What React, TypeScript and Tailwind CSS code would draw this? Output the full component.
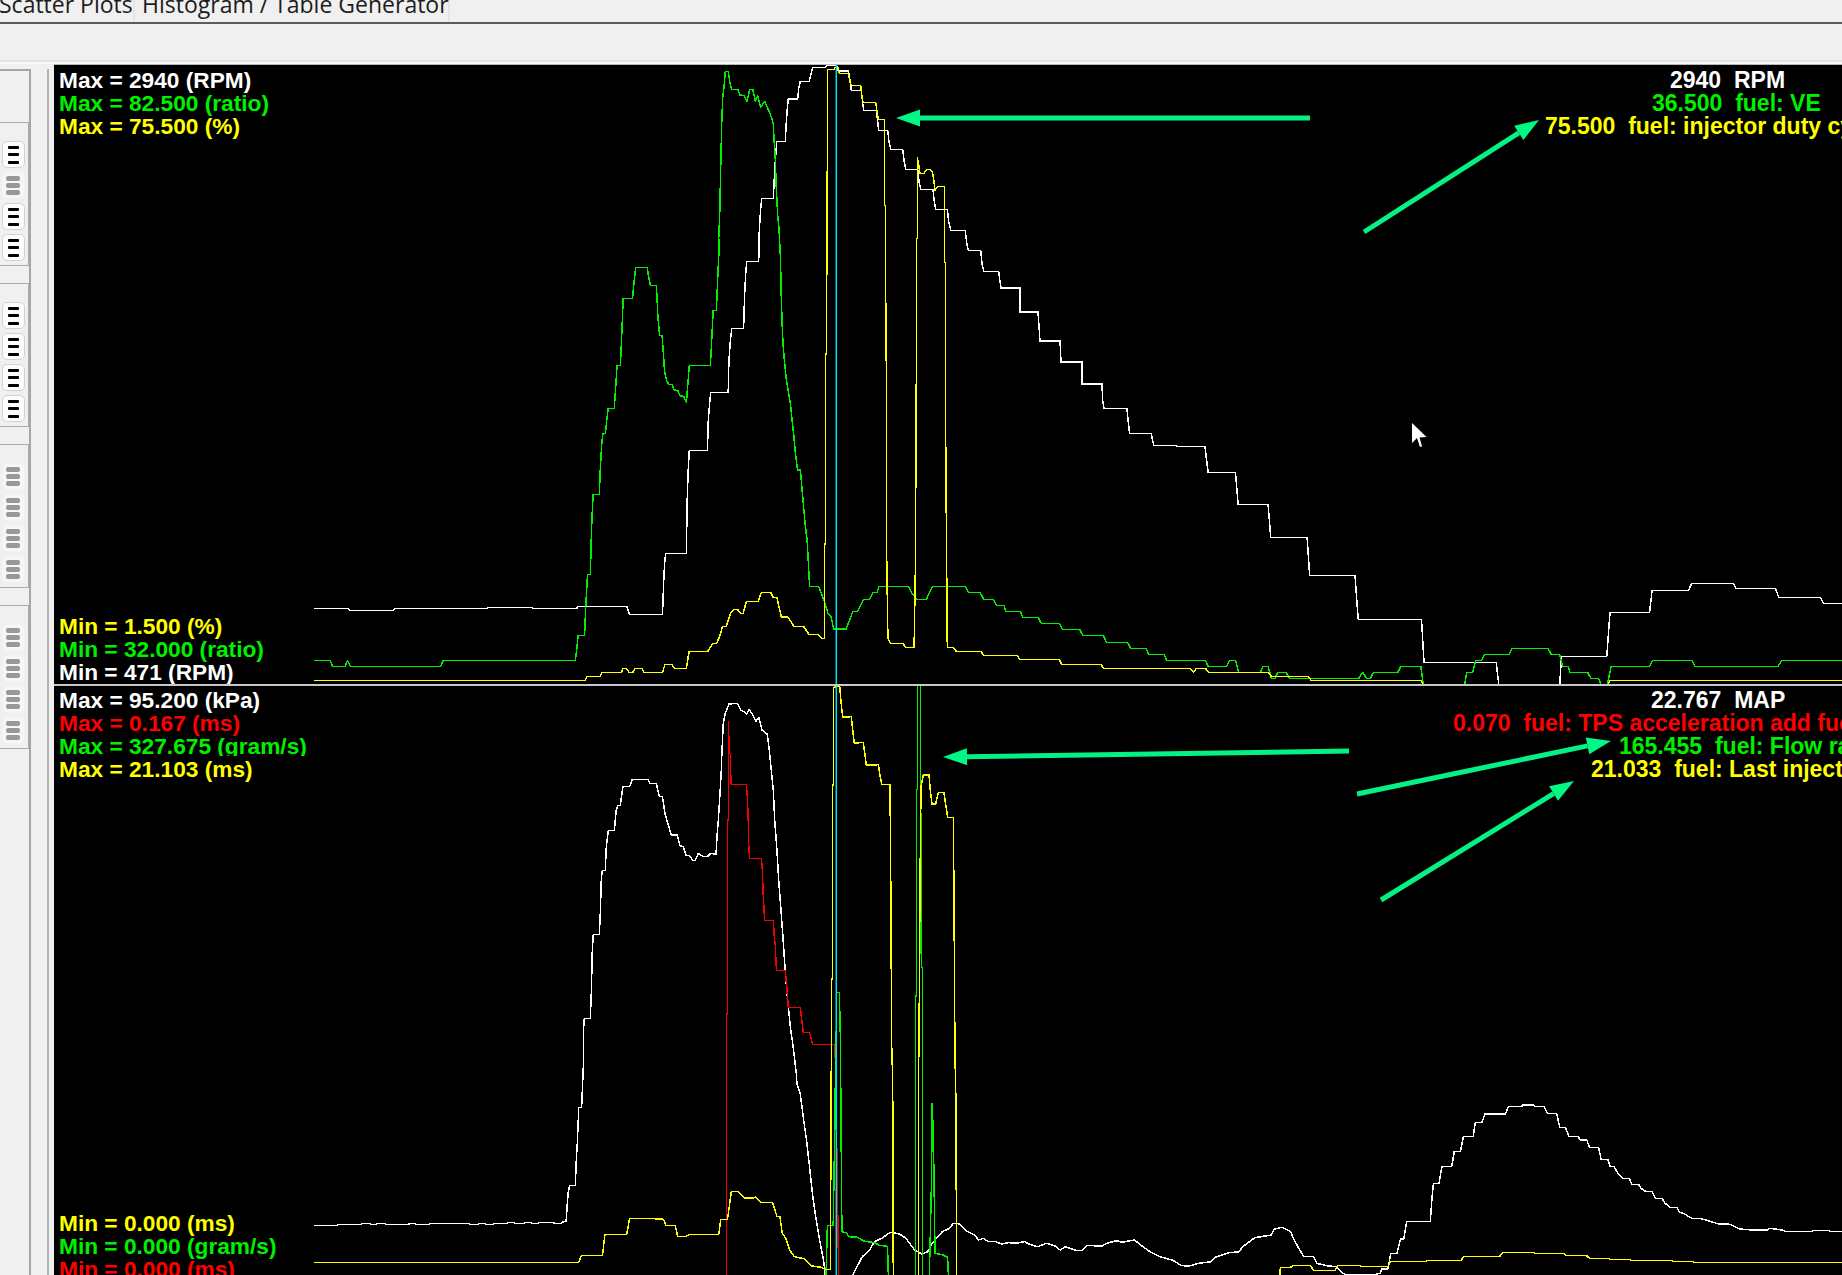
import React from 'react';

// crop-space readings of each trace -> page coords
const at =
  (ox: number, oy: number, kx: number, ky = 3) =>
  (...v: number[]) => {
    const out: string[] = [];
    for (let i = 0; i < v.length; i += 2) {
      out.push(`${(ox + v[i] / kx).toFixed(1)},${(oy + v[i + 1] / ky).toFixed(1)}`);
    }
    return out.join(' ');
  };
const page = at(0, 0, 1, 1);
const z6 = at(650, 55, 3);
const z8 = at(300, 240, 2.8);
const z9 = at(840, 400, 1.565);
const z10 = at(540, 680, 3);
const z11 = at(300, 1060, 2.063);
const z12 = at(1040, 1060, 1.955);

const WHITE = '#ffffff';
const GREEN = '#00f000';
const YELLOW = '#ffff00';
const RED = '#f00000';
const CYAN = '#00e0f0';

type Trace = { color: string; points: string };

const upperTraces: Trace[] = [
  {
    color: WHITE,
    points: [
      z8(39, 1105, 134, 1105, 140, 1111, 260, 1111, 266, 1105, 524, 1105, 526, 1102, 650, 1102, 652, 1105, 775, 1105, 779, 1099, 915, 1099, 922, 1123, 1015, 1123, 1018, 1030, 1021, 970, 1024, 940, 1082, 940, 1084, 790, 1087, 690, 1090, 631, 1141, 631, 1143, 545, 1147, 490, 1150, 457, 1199, 457, 1201, 365, 1205, 300, 1209, 265, 1242, 265, 1245, 165, 1248, 100, 1251, 64),
      z6(326, 620, 328, 525, 332, 460, 335, 430, 370, 430, 374, 345, 378, 290, 380, 259, 406, 259, 409, 200, 412, 160, 415, 132, 443, 132, 446, 100, 451, 79, 478, 79, 483, 57, 488, 37, 526, 37, 530, 32, 560, 32, 565, 48, 595, 48, 599, 70, 604, 106, 634, 106, 638, 145, 641, 166, 679, 166, 683, 200, 686, 226, 713, 226, 717, 260, 722, 283, 758, 283, 763, 320, 767, 343, 803, 343, 808, 385, 812, 403, 849, 403, 853, 440, 857, 463, 892, 463, 896, 500, 902, 526, 946, 526, 950, 565, 955, 586, 992, 586, 996, 625, 1001, 649, 1046, 649, 1050, 680),
      page(1001, 288, 1020, 288, 1020, 312, 1038, 312, 1040, 341, 1060, 341, 1061, 362, 1082, 362, 1082, 384, 1102, 384),
      z9(411, 0, 413, 25, 449, 25, 453, 100, 487, 100, 491, 136, 526, 136, 527, 139, 571, 139, 576, 217, 619, 217, 623, 313, 670, 313, 674, 412, 731, 412, 735, 526, 806, 526, 811, 658, 910, 658, 914, 787, 1027, 787, 1032, 870, 1126, 870, 1129, 769, 1200, 769, 1205, 637, 1267, 637, 1271, 571, 1328, 571, 1333, 550, 1398, 550, 1402, 565, 1464, 565, 1469, 592, 1534, 592, 1539, 610, 1568, 610),
    ].join(' '),
  },
  {
    color: GREEN,
    points: [
      z8(39, 1261, 84, 1261, 91, 1279, 126, 1279, 133, 1262, 141, 1279, 394, 1279, 401, 1261, 771, 1261, 775, 1225, 779, 1186, 797, 1186, 800, 1100, 803, 1040, 805, 1003, 813, 1003, 816, 880, 819, 800, 821, 763, 838, 763, 841, 680, 845, 610, 848, 580, 855, 580, 859, 540, 863, 505, 880, 505, 884, 440, 888, 376, 897, 376, 901, 280, 905, 175, 931, 175, 935, 130, 940, 82, 972, 82, 976, 110, 981, 136, 998, 136, 1002, 230, 1007, 287, 1014, 287, 1018, 350, 1021, 395, 1026, 420, 1032, 433, 1041, 433, 1048, 450, 1058, 452, 1064, 467, 1074, 469, 1082, 487, 1086, 430, 1090, 376, 1149, 376, 1153, 295, 1157, 211, 1166, 211, 1170, 100, 1175, 0),
      z6(205, 580, 209, 480, 212, 340, 215, 207, 218, 127, 222, 95, 226, 49, 235, 49, 240, 85, 245, 103, 263, 103, 270, 120, 283, 122, 291, 140, 299, 103, 308, 103, 316, 138, 323, 122, 332, 157, 344, 139, 358, 170, 365, 190, 370, 207, 372, 250, 376, 315, 379, 400, 383, 480, 387, 520, 391, 600),
      z8(1345, 40, 1347, 150, 1350, 250, 1353, 320, 1358, 380, 1362, 420, 1368, 460, 1373, 490, 1378, 540, 1383, 590, 1387, 640, 1393, 690, 1401, 690, 1405, 740, 1410, 800, 1415, 860, 1420, 900, 1423, 960, 1427, 1039, 1452, 1039, 1460, 1060, 1470, 1090, 1478, 1120, 1487, 1130, 1494, 1167, 1529, 1167),
      z9(20, 635, 27, 635, 37, 598, 46, 598, 52, 577, 58, 577, 61, 559, 107, 559, 112, 578, 120, 598, 135, 598, 145, 559, 196, 559, 201, 577, 219, 577, 225, 598, 240, 598, 245, 616, 257, 616, 259, 634, 282, 634, 286, 652, 310, 652, 315, 670, 343, 670, 348, 688, 375, 688, 380, 706, 412, 706, 417, 727, 450, 727, 455, 745, 479, 745, 483, 763, 507, 763, 511, 781, 572, 781, 576, 799, 605, 799, 610, 781, 619, 781, 624, 817, 658, 817, 662, 799, 670, 799, 675, 835, 681, 835, 685, 817, 698, 817, 704, 835, 812, 835, 818, 817, 824, 835, 830, 835, 835, 817, 873, 817, 878, 799, 909, 799, 914, 870, 976, 870, 981, 817, 990, 817, 995, 781, 1004, 781, 1009, 763, 1047, 763, 1052, 745, 1108, 745, 1113, 763, 1126, 763, 1131, 799, 1140, 799, 1142, 817, 1170, 817, 1175, 835, 1187, 835, 1192, 860, 1200, 860, 1207, 799, 1267, 799, 1272, 781, 1333, 781, 1338, 799, 1468, 799, 1474, 781, 1568, 781),
    ].join(' '),
  },
  {
    color: YELLOW,
    points: [
      z8(39, 1321, 798, 1321, 804, 1309, 840, 1309, 846, 1297, 900, 1297, 905, 1285, 914, 1285, 921, 1297, 932, 1297, 938, 1285, 957, 1285, 963, 1297, 1015, 1297, 1022, 1273, 1041, 1273, 1048, 1285, 1082, 1285, 1087, 1250, 1090, 1234, 1142, 1234, 1155, 1211, 1166, 1211, 1175, 1190, 1183, 1159, 1193, 1159, 1206, 1120, 1215, 1108, 1225, 1108, 1233, 1120, 1241, 1120, 1250, 1084, 1283, 1084, 1292, 1057, 1318, 1057, 1325, 1072, 1335, 1072, 1348, 1131, 1366, 1131, 1383, 1159, 1410, 1159, 1425, 1183, 1451, 1183, 1460, 1195, 1468, 1195, 1468, 912, 1471, 912, 1471, 342, 1474, 342),
      z6(532, 327, 532, 43, 553, 43, 555, 37, 563, 37, 568, 55, 595, 55, 600, 80, 604, 91, 632, 91, 636, 125, 639, 142, 677, 142, 681, 170, 685, 193, 703, 193, 704, 450, 707, 455, 707, 720),
      z9(73, 0, 73, 450, 75, 715, 79, 730, 98, 730, 103, 742, 116, 742, 118, 500),
      z6(800, 720, 800, 550, 802, 550, 802, 307, 806, 330, 810, 355, 822, 355, 830, 343, 840, 343, 847, 350, 852, 380, 855, 405, 862, 395, 883, 394, 884, 620, 887, 625, 887, 720),
      z9(165, 0, 167, 510, 168, 742, 177, 742, 182, 754, 220, 754, 225, 766, 277, 766, 281, 778, 343, 778, 347, 793, 408, 793, 413, 805, 548, 805, 553, 817, 558, 805, 572, 805, 577, 817, 670, 817, 675, 829, 733, 829, 737, 841, 909, 841, 914, 860, 1200, 860, 1205, 841, 1568, 841),
    ].join(' '),
  },
];

const lowerTraces: Trace[] = [
  {
    color: WHITE,
    points: [
      z11(29, 496, 76, 496, 78, 493, 126, 493, 128, 490, 143, 490, 146, 493, 157, 493, 159, 490, 175, 490, 177, 493, 224, 493, 227, 490, 237, 490, 239, 493, 267, 493, 270, 490, 348, 490, 351, 493, 367, 493, 369, 490, 381, 490, 383, 493, 398, 493, 400, 490, 428, 490, 431, 487, 441, 487, 443, 490, 462, 490, 464, 487, 476, 487, 478, 490, 492, 490, 494, 487, 522, 487, 525, 490, 538, 490, 541, 487, 549, 484, 551, 440, 553, 400, 556, 376, 568, 376, 570, 300, 572, 250, 574, 185, 575, 143, 581, 143, 585, 0),
      z10(130, 1060, 133, 1015, 151, 1015, 154, 940, 157, 810, 160, 763, 178, 763, 181, 700, 184, 600, 187, 571, 196, 571, 199, 500, 205, 451, 223, 451, 229, 390, 233, 376, 241, 376, 249, 319, 269, 319, 277, 298, 323, 298, 330, 310, 349, 310, 358, 349, 367, 349, 376, 405, 394, 465, 412, 465, 420, 497, 430, 500, 438, 525, 449, 527, 458, 541, 466, 541, 475, 520, 490, 530, 502, 530, 512, 520, 528, 523, 531, 470, 535, 420, 540, 340, 544, 270, 546, 210, 550, 130, 556, 100, 567, 72, 592, 70, 602, 90, 612, 95, 620, 103, 628, 88, 637, 103, 648, 123, 656, 112, 666, 150, 682, 163, 688, 210, 694, 270, 700, 330, 704, 420, 710, 500, 716, 600, 722, 680, 728, 760, 734, 850, 740, 930, 746, 990, 752, 1050, 758, 1090, 764, 1140, 770, 1190),
      z11(1025, 70, 1032, 100, 1038, 170, 1045, 240, 1052, 330, 1058, 410, 1065, 480, 1072, 540, 1080, 600, 1085, 660, 1135, 660, 1140, 645, 1160, 590, 1175, 570, 1185, 545, 1200, 535, 1218, 517, 1237, 522, 1250, 535, 1268, 570, 1283, 582, 1295, 575, 1305, 548, 1325, 515, 1340, 505, 1348, 490, 1358, 490, 1375, 513, 1392, 525, 1400, 540, 1410, 535, 1420, 545, 1435, 545, 1448, 552, 1460, 548, 1480, 549, 1495, 545, 1505, 553, 1522, 560, 1540, 550, 1558, 558, 1568, 570),
      z12(50, 560, 70, 571, 83, 571, 92, 556, 120, 559, 130, 550, 150, 542, 160, 547, 185, 540, 195, 553, 215, 575, 235, 590, 260, 601, 275, 616, 290, 619, 310, 610, 335, 605, 342, 592, 370, 578, 390, 575, 395, 562, 420, 533, 452, 525, 458, 508, 473, 502, 490, 515, 497, 540, 506, 565, 516, 590, 535, 590, 541, 610, 560, 617, 580, 620, 592, 640, 600, 645, 650, 645, 665, 640, 668, 627, 680, 627, 686, 580, 698, 580, 705, 537, 711, 537, 717, 484, 763, 484, 766, 420, 769, 370, 780, 370, 786, 319, 805, 319, 810, 274, 822, 274, 828, 229, 847, 229, 851, 187, 864, 187, 870, 162, 910, 162, 916, 139, 942, 139, 944, 135, 965, 135, 967, 139, 985, 139, 992, 160, 1010, 160, 1016, 202, 1027, 202, 1034, 229, 1052, 229, 1056, 240, 1069, 240, 1074, 262, 1092, 262, 1097, 298, 1110, 298, 1115, 320, 1122, 320, 1130, 340, 1139, 355, 1152, 355, 1157, 373, 1170, 373, 1175, 385, 1185, 395, 1197, 395, 1203, 415, 1216, 415, 1222, 430, 1232, 442, 1245, 442, 1250, 456, 1260, 462, 1274, 475, 1293, 476, 1310, 484, 1327, 492, 1350, 493, 1367, 507, 1393, 510, 1422, 510, 1427, 505, 1450, 510, 1457, 514, 1510, 514, 1513, 511, 1540, 511, 1545, 514, 1568, 514),
    ].join(' '),
  },
  {
    color: RED,
    points: z10(559, 1790, 559, 1002, 562, 1002, 562, 420, 565, 420, 565, 126, 568, 220, 571, 220, 572, 280, 574, 313, 619, 313, 622, 350, 625, 425, 626, 495, 629, 535, 664, 535, 667, 568, 669, 628, 672, 690, 674, 721, 700, 721, 703, 770, 706, 795, 708, 850, 710, 871, 736, 871, 740, 920, 745, 982, 781, 982, 785, 1020, 790, 1057, 808, 1057, 812, 1070, 818, 1093, 885, 1093, 888, 1250, 896, 1790),
  },
  {
    color: GREEN,
    points: [
      z11(1085, 660, 1088, 496, 1100, 496, 1104, 150),
      z10(887, 1055, 890, 1055, 890, 937, 898, 937, 901, 1060, 902, 1200),
      z11(1118, 515, 1127, 518, 1132, 530, 1150, 532, 1163, 543, 1185, 548, 1195, 556, 1212, 559, 1214, 660),
    ].join(' '),
  },
  {
    color: GREEN,
    points: [
      z10(1127, 1790, 1127, 948, 1130, 948, 1130, 328, 1133, 328, 1133, 17, 1141, 17, 1143, 600, 1144, 860, 1148, 865, 1148, 1790),
      z11(1298, 660, 1300, 540, 1303, 350, 1304, 130, 1306, 205, 1308, 350, 1310, 580, 1325, 584, 1336, 592, 1338, 660),
    ].join(' '),
  },
  {
    color: YELLOW,
    points: [
      z11(29, 607, 575, 607, 581, 586, 624, 586, 629, 523, 674, 523, 680, 475, 719, 475, 750, 478, 755, 496, 774, 496, 779, 529, 797, 529, 803, 523, 864, 523, 868, 478, 882, 478, 890, 394, 903, 394, 918, 414, 935, 414, 940, 411, 950, 427, 975, 427, 984, 470, 990, 470, 995, 520, 1002, 535, 1010, 570, 1020, 590, 1040, 596, 1056, 618, 1075, 622, 1083, 628, 1094, 628, 1095, 340),
      z10(875, 897, 878, 897, 878, 315, 881, 315, 881, 22, 899, 18, 903, 65, 908, 112, 934, 110, 938, 150, 943, 190, 970, 187, 975, 225, 979, 256, 1015, 254, 1020, 285, 1025, 313, 1050, 313, 1052, 570, 1055, 1095, 1058, 1200, 1060, 1790, 1135, 1790, 1135, 1200, 1137, 1100, 1140, 610, 1143, 320, 1150, 285, 1167, 285, 1171, 330, 1176, 372, 1187, 372, 1195, 338, 1212, 338, 1218, 380, 1223, 412, 1240, 412, 1242, 657, 1245, 1145, 1247, 1200, 1250, 1790),
      z12(468, 660, 470, 622, 490, 622, 495, 616, 528, 616, 535, 631, 577, 631, 582, 616, 625, 616, 628, 619, 681, 619, 685, 604, 755, 604, 757, 601, 823, 601, 829, 589, 899, 589, 905, 577, 965, 577, 968, 580, 1024, 580, 1028, 586, 1068, 586, 1074, 595, 1112, 595, 1115, 598, 1153, 598, 1155, 601, 1235, 601, 1237, 604, 1277, 604, 1279, 607, 1568, 607),
    ].join(' '),
  },
];

type Arrow = { x1: number; y1: number; x2: number; y2: number; w?: number };

function ArrowMark({ x1, y1, x2, y2, w = 5 }: Arrow) {
  const len = Math.hypot(x2 - x1, y2 - y1);
  const ux = (x2 - x1) / len;
  const uy = (y2 - y1) / len;
  const bx = x2 - ux * 24;
  const by = y2 - uy * 24;
  return (
    <g>
      <line x1={x1} y1={y1} x2={bx} y2={by} stroke="#06f184" strokeWidth={w} />
      <polygon
        fill="#00f884"
        points={`${x2},${y2} ${bx - uy * 8.5},${by + ux * 8.5} ${bx + uy * 8.5},${by - ux * 8.5}`}
      />
    </g>
  );
}

function Plot({
  viewBox,
  traces,
  arrows,
  children,
}: {
  viewBox: string;
  traces: Trace[];
  arrows: Arrow[];
  children?: React.ReactNode;
}) {
  const [, , , h] = viewBox.split(' ');
  return (
    <svg
      className="absolute inset-0 w-full"
      style={{ height: Number(h) }}
      viewBox={viewBox}
      fill="none"
    >
      {traces.map((t, i) => (
        <polyline
          key={i}
          points={t.points}
          stroke={t.color}
          strokeWidth={1.5}
          strokeLinejoin="round"
          shapeRendering="crispEdges"
          fill="none"
        />
      ))}
      <line x1={836.3} y1={0} x2={836.3} y2={1275} stroke={CYAN} strokeWidth={1.5} />
      {arrows.map((a, i) => (
        <ArrowMark key={i} {...a} />
      ))}
      {children}
    </svg>
  );
}

type Row = { text: string; color: string; left?: number; clip?: boolean };

function Readouts({ rows, className }: { rows: Row[]; className: string }) {
  return (
    <div className={`absolute whitespace-pre font-bold leading-[23px] ${className}`}>
      {rows.map((r) => (
        <div key={r.text} className="h-[23px]" style={{ color: r.color, marginLeft: r.left ?? 0 }}>
          <div className={r.clip ? 'h-[21px] overflow-hidden' : ''}>{r.text}</div>
        </div>
      ))}
    </div>
  );
}

function SideButton({ on }: { on: boolean }) {
  return (
    <div
      className={`flex h-[27px] w-[23px] flex-col items-center justify-center rounded-[5px] border ${
        on ? 'gap-[4.5px] border-[#d2d2d2] bg-[#fcfcfc]' : 'gap-[1.5px] border-[#f2f2f2] bg-[#f6f6f6]'
      }`}
    >
      {[0, 1, 2].map((i) => (
        <div
          key={i}
          className={on ? 'h-[3px] w-[11px] rounded-[1px] bg-black' : 'h-[5.5px] w-[14px] rounded-[2px] bg-[#989898]'}
        />
      ))}
    </div>
  );
}

const groups = [
  [true, false, true, true],
  [true, true, true, true],
  [false, false, false, false],
  [false, false, false, false],
];

function Sidebar() {
  return (
    <div className="flex w-[54px] shrink-0 pt-[5px]">
      <div className="h-full w-[31px] border-t-2 border-r-2 border-[#a3a7aa] pt-[51px]">
        {groups.map((g, i) => (
          <div
            key={i}
            className="mb-[17px] flex h-[144px] w-[29px] flex-col gap-[4px] border-t border-r border-b border-[#a8acae] pt-[18px] pl-[1.5px]"
          >
            {g.map((on, j) => (
              <SideButton key={j} on={on} />
            ))}
          </div>
        ))}
      </div>
      <div className="ml-[16px] h-full w-[2px] bg-[#b4b4b4]" />
    </div>
  );
}

export default function App() {
  return (
    <div
      className="flex h-[1275px] w-[1842px] flex-col overflow-hidden bg-[#f0f0f0]"
      style={{ fontFamily: '"Liberation Sans", Arial, sans-serif' }}
    >
      <div className="flex h-[22px] shrink-0 overflow-hidden whitespace-nowrap text-[23px] leading-[26px] text-[#1c1c1c]">
        <div
          className="-ml-[1px] -mt-[9px] h-[31px] w-[136px] shrink-0 border-r-2 border-[#e4e4e4]"
          style={{ fontFamily: '"Open Sans", sans-serif' }}
        >
          Scatter Plots
        </div>
        <div
          className="-mt-[9px] h-[31px] w-[315px] shrink-0 border-r-2 border-[#e4e4e4] pl-[7px]"
          style={{ fontFamily: '"Open Sans", sans-serif' }}
        >
          Histogram / Table Generator
        </div>
      </div>
      <div className="h-[2px] shrink-0 bg-[#5a5a5a]" />
      <div className="h-[36px] shrink-0" />
      <div className="h-[2px] shrink-0 bg-[#e3e3e3]" />
      <div className="h-[2px] shrink-0 bg-[#f8f8f8]" />
      <div className="flex min-h-0 flex-1">
        <Sidebar />
        <div className="min-w-0 flex-1 border-t border-[#b8b8b8] bg-black">
          <div className="relative h-[619px] overflow-hidden">
            <Plot
              viewBox="54 65 1788 619"
              traces={upperTraces}
              arrows={[
                { x1: 1310, y1: 118, x2: 896, y2: 118 },
                { x1: 1364, y1: 232, x2: 1539, y2: 120 },
              ]}
            >
              <polygon
                fill="#ffffff"
                points="1412,423 1412,443 1417,438 1420,447 1422,446.5 1419.5,437.5 1426.5,437"
              />
            </Plot>
            <Readouts
              className="top-[3.5px] left-[5px] text-[22.7px]"
              rows={[
                { text: 'Max = 2940 (RPM)', color: '#ffffff' },
                { text: 'Max = 82.500 (ratio)', color: '#00f000' },
                { text: 'Max = 75.500 (%)', color: '#ffff00' },
              ]}
            />
            <Readouts
              className="bottom-0 left-[5px] text-[22.7px]"
              rows={[
                { text: 'Min = 1.500 (%)', color: '#ffff00' },
                { text: 'Min = 32.000 (ratio)', color: '#00f000' },
                { text: 'Min = 471 (RPM)', color: '#ffffff' },
              ]}
            />
            <Readouts
              className="top-[3.5px] left-0 text-[23px]"
              rows={[
                { text: '2940  RPM', color: '#ffffff', left: 1616 },
                { text: '36.500  fuel: VE', color: '#00f000', left: 1598 },
                { text: '75.500  fuel: injector duty cycle', color: '#ffff00', left: 1491 },
              ]}
            />
          </div>
          <div className="h-[2px] bg-[#c8c8c8]" />
          <div className="relative h-[590px] overflow-hidden">
            <Plot
              viewBox="54 686 1788 590"
              traces={lowerTraces}
              arrows={[
                { x1: 1349, y1: 751, x2: 943, y2: 757 },
                { x1: 1357, y1: 794, x2: 1611, y2: 741 },
                { x1: 1381, y1: 900, x2: 1574, y2: 781 },
              ]}
            />
            <Readouts
              className="top-[2.5px] left-[5px] text-[22.7px]"
              rows={[
                { text: 'Max = 95.200 (kPa)', color: '#ffffff' },
                { text: 'Max = 0.167 (ms)', color: '#ff0000' },
                { text: 'Max = 327.675 (gram/s)', color: '#00f000', clip: true },
                { text: 'Max = 21.103 (ms)', color: '#ffff00' },
              ]}
            />
            <Readouts
              className="top-[525.5px] left-[5px] text-[22.7px]"
              rows={[
                { text: 'Min = 0.000 (ms)', color: '#ffff00' },
                { text: 'Min = 0.000 (gram/s)', color: '#00f000' },
                { text: 'Min = 0.000 (ms)', color: '#ff0000' },
              ]}
            />
            <Readouts
              className="top-[2.5px] left-0 text-[23px]"
              rows={[
                { text: '22.767  MAP', color: '#ffffff', left: 1597 },
                { text: '0.070  fuel: TPS acceleration add fuel', color: '#ff0000', left: 1399 },
                { text: '165.455  fuel: Flow rate', color: '#00f000', left: 1565 },
                { text: '21.033  fuel: Last injection', color: '#ffff00', left: 1537 },
              ]}
            />
          </div>
        </div>
      </div>
    </div>
  );
}
